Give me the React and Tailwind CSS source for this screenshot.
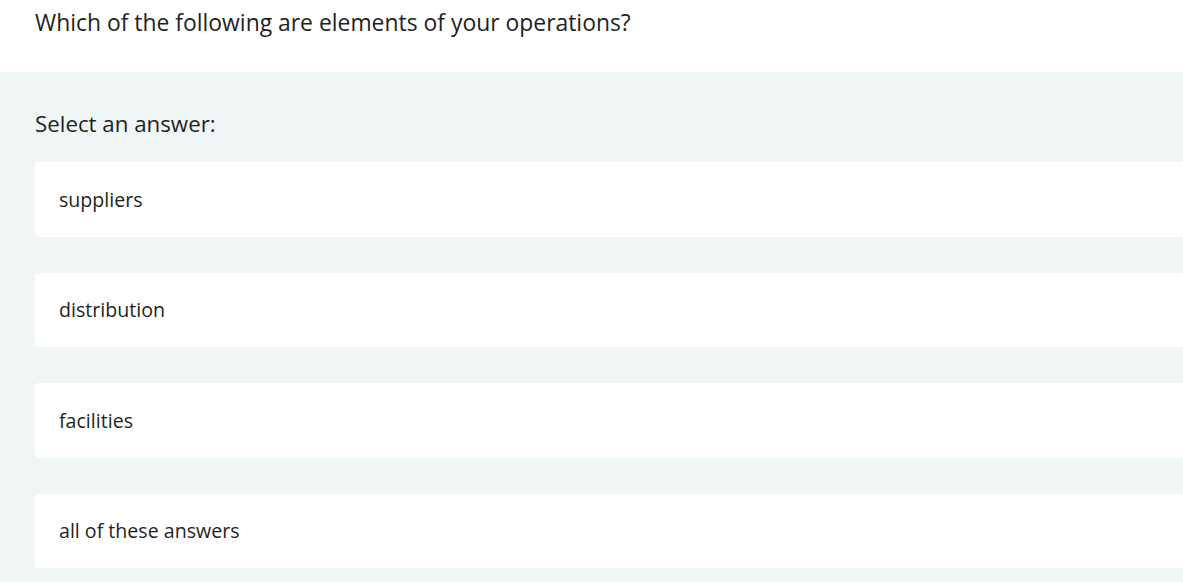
export default function App() {
  const answers = ['suppliers', 'distribution', 'facilities', 'all of these answers'];

  return (
    <div className="min-h-screen bg-[#f0f5f5] text-[#1f1f1f] font-['Open_Sans',sans-serif]">
      {/* Question */}
      <div className="bg-white h-[72px] pl-[35px] pt-[7px]">
        <h1 className="text-[22.9px] leading-[32px]">
          Which of the following are elements of your operations?
        </h1>
      </div>

      {/* Answers */}
      <div className="pl-[35px] pt-[36px]">
        <p className="text-[22.3px] leading-[32px] mb-[22px]">Select an answer:</p>
        <div className="flex flex-col gap-[36px]">
          {answers.map((answer) => (
            <div
              key={answer}
              className="bg-white h-[74.5px] rounded-l-[4px] pl-[24px] flex items-center text-[19.6px]"
            >
              {answer}
            </div>
          ))}
        </div>
      </div>
    </div>
  );
}
